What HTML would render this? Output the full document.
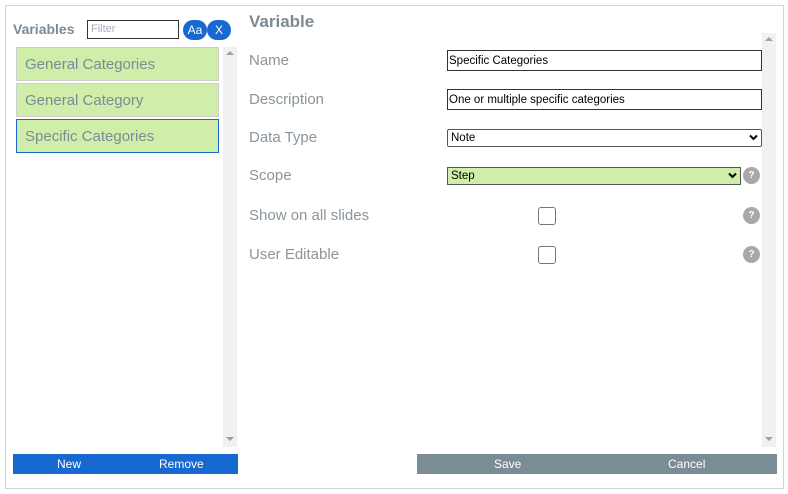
<!DOCTYPE html><html><head><style>
body{margin:0;width:788px;height:494px;background:#fff;font-family:"Liberation Sans",sans-serif;position:relative;overflow:hidden}
.a{position:absolute}
.frame{left:5px;top:5px;width:777px;height:482px;border:1px solid #d4d4d4}
.item{left:16px;background:#d0eeaa;border:1px solid #cfcfcf;color:#7b8b96;font-size:15px;line-height:34px;padding-left:8px;box-sizing:border-box;width:203px;height:34px}
.lbl{left:249px;color:#8a959c;font-size:15px}
.inp{left:447px;width:315px;height:21px;border:1px solid #333;box-sizing:border-box;font-size:11.5px;line-height:20px;padding-left:1px;color:#000}
.q{width:17px;height:17px;border-radius:50%;background:#a8a8a8;color:#fff;font-size:10px;font-weight:bold;text-align:center;line-height:17px}
.cb{width:18px;height:18px;border:1px solid #777;border-radius:3px;box-sizing:border-box}
.sb{background:#f1f1f1;width:14px}
.btn{color:#fff;font-size:12px;text-align:center;line-height:20px;height:20px}
.chev{position:absolute;right:3px;top:4px}
</style></head><body>
<div class="a frame"></div>
<div class="a" style="left:13px;top:21px;font-size:14px;font-weight:bold;color:#7b8b96">Variables</div>
<div class="a" style="left:87px;top:20px;width:92px;height:19px;border:1px solid #333;box-sizing:border-box;font-size:11px;color:#aab;line-height:17px;padding-left:3px">Filter</div>
<div class="a" style="left:183px;top:20px;width:24px;height:20px;border-radius:10px;background:#1769d1;color:#fff;font-size:12px;text-align:center;line-height:20px">Aa</div>
<div class="a" style="left:207px;top:20px;width:24px;height:20px;border-radius:10px;background:#1769d1;color:#fff;font-size:12px;text-align:center;line-height:20px">X</div>
<div class="a item" style="top:47px">General Categories</div>
<div class="a item" style="top:83px">General Category</div>
<div class="a item" style="top:119px;border-color:#1769d1">Specific Categories</div>
<div class="a sb" style="left:223px;top:47px;height:400px"></div>
<div class="a" style="left:226px;top:51px;width:0;height:0;border:4px solid transparent;border-bottom-color:#a0a0a0;border-top:0"></div>
<div class="a" style="left:226px;top:437px;width:0;height:0;border:4px solid transparent;border-top-color:#a0a0a0;border-bottom:0"></div>
<div class="a btn" style="left:13px;top:454px;width:225px;background:#1769d1"><span class="a" style="left:44px">New</span><span class="a" style="left:146px">Remove</span></div>
<div class="a" style="left:249px;top:12px;font-size:17px;font-weight:bold;color:#7b8b96">Variable</div>
<div class="a lbl" style="top:52px">Name</div>
<div class="a lbl" style="top:91px">Description</div>
<div class="a lbl" style="top:129px">Data Type</div>
<div class="a lbl" style="top:167px">Scope</div>
<div class="a lbl" style="top:207px">Show on all slides</div>
<div class="a lbl" style="top:246px">User Editable</div>
<div class="a inp" style="top:50px">Specific Categories</div>
<div class="a inp" style="top:89px">One or multiple specific categories</div>
<div class="a inp" style="top:129px;height:18px;line-height:17px;border-color:#555;border-radius:2px;padding-left:3px">Note<svg class="chev" width="9" height="7" viewBox="0 0 9 7"><path d="M1 1.5l3.5 3.5 3.5-3.5" stroke="#000" stroke-width="2" fill="none"/></svg></div>
<div class="a inp" style="top:167px;width:294px;height:18px;line-height:17px;border-color:#555;background:#d0eeaa;padding-left:3px">Step<svg class="chev" width="9" height="7" viewBox="0 0 9 7"><path d="M1 1.5l3.5 3.5 3.5-3.5" stroke="#000" stroke-width="2" fill="none"/></svg></div>
<div class="a q" style="left:743px;top:167px">?</div>
<div class="a q" style="left:743px;top:207px">?</div>
<div class="a q" style="left:743px;top:246px">?</div>
<div class="a cb" style="left:538px;top:207px"></div>
<div class="a cb" style="left:538px;top:246px"></div>
<div class="a sb" style="left:762px;top:33px;height:414px"></div>
<div class="a" style="left:765px;top:37px;width:0;height:0;border:4px solid transparent;border-bottom-color:#a0a0a0;border-top:0"></div>
<div class="a" style="left:765px;top:437px;width:0;height:0;border:4px solid transparent;border-top-color:#a0a0a0;border-bottom:0"></div>
<div class="a btn" style="left:417px;top:454px;width:360px;background:#7a8c96"><span class="a" style="left:77px">Save</span><span class="a" style="left:251px">Cancel</span></div>
</body></html>
